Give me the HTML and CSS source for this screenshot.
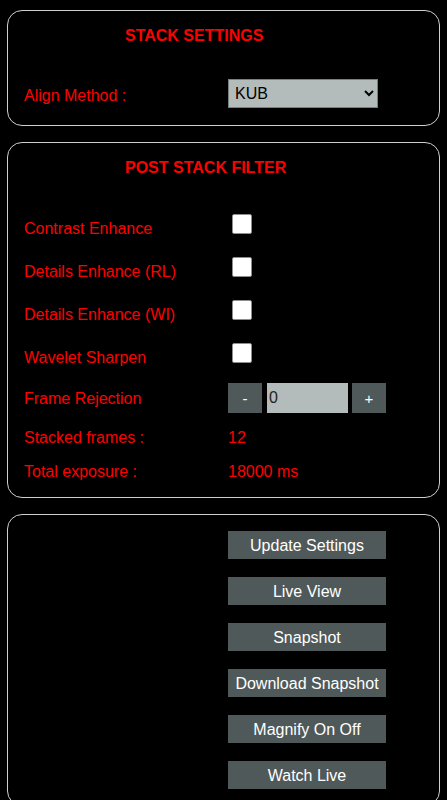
FILE: index.html
```html
<!DOCTYPE html>
<html lang="en">
<head>
  <meta charset="UTF-8" />
  <meta name="viewport" content="width=device-width, initial-scale=1.0" />
  <title>Stack Settings</title>
  <link rel="stylesheet" href="styles.css">
</head>
<body>
  <div class="panel stack">
    <h2 class="title">STACK SETTINGS</h2>
    <div class="row select-row">
      <label for="alignMethod">Align Method :</label>
      <select id="alignMethod">
        <option>KUB</option>
        <option>ECC</option>
        <option>None</option>
      </select>
    </div>
  </div>

  <div class="panel filter">
    <h2 class="title">POST STACK FILTER</h2>
    <div class="row check-row first">
      <label for="contrast">Contrast Enhance</label>
      <input type="checkbox" id="contrast" />
    </div>
    <div class="row check-row">
      <label for="detailsRL">Details Enhance (RL)</label>
      <input type="checkbox" id="detailsRL" />
    </div>
    <div class="row check-row">
      <label for="detailsWI">Details Enhance (WI)</label>
      <input type="checkbox" id="detailsWI" />
    </div>
    <div class="row check-row">
      <label for="wavelet">Wavelet Sharpen</label>
      <input type="checkbox" id="wavelet" />
    </div>
    <div class="row frame-row">
      <label for="frameReject">Frame Rejection</label>
      <button class="step">-</button>
      <input type="text" id="frameReject" value="0" />
      <button class="step plus">+</button>
    </div>
    <div class="row info-row">
      <label>Stacked frames :</label>
      <span id="stackedFrames">12</span>
    </div>
    <div class="row info-row last">
      <label>Total exposure :</label>
      <span id="totalExposure">18000 ms</span>
    </div>
  </div>

  <div class="panel actions">
    <button>Update Settings</button>
    <button>Live View</button>
    <button>Snapshot</button>
    <button>Download Snapshot</button>
    <button>Magnify On Off</button>
    <button>Watch Live</button>
  </div>
</body>
</html>
```

FILE: styles.css
```css
body {
  margin: 0;
  padding: 10px 7px 0 7px;
  background: #000;
  color: #ff0000;
  font-family: "Liberation Sans", Arial, sans-serif;
  font-size: 16px;
}

.panel {
  border: 1px solid #cfcfcf;
  border-radius: 15px;
  padding: 14px 16px 17px 16px;
  margin-bottom: 16px;
}

.title {
  margin: 0;
  padding: 1px 0 0 101px;
  height: 19px;
  line-height: 20px;
  font-size: 16px;
  font-weight: bold;
  color: #ff0000;
}

.row {
  display: flex;
  align-items: center;
  height: 30px;
}

.row label {
  width: 204px;
  flex-shrink: 0;
  padding-top: 2px;
}

.row span {
  padding-top: 2px;
}

.select-row {
  margin-top: 34px;
  height: 29px;
}

.select-row label {
  padding-top: 4px;
}

select {
  width: 150px;
  height: 29px;
  background: #b3bbbb;
  border: 1px solid #7a7f7f;
  border-radius: 0;
  color: #000;
  font-family: "Liberation Sans", Arial, sans-serif;
  font-size: 16px;
  padding: 0 2px;
}

.filter {
  padding-bottom: 11px;
}

.check-row {
  margin-top: 13px;
}

.check-row.first {
  margin-top: 32px;
}

.check-row label {
  padding-top: 9px;
}

input[type="checkbox"] {
  appearance: none;
  -webkit-appearance: none;
  width: 20px;
  height: 20px;
  margin: 0 0 0 4px;
  background: #fff;
  border: 1px solid #8d8d8d;
  border-radius: 2px;
}

.frame-row {
  margin-top: 15px;
}

.step {
  width: 34px;
  height: 30px;
  padding: 0;
  background: #4f5959;
  color: #fff;
  border: 1px solid #4f5959;
  font-family: "Liberation Sans", Arial, sans-serif;
  font-size: 15px;
}

.step.plus {
  margin-left: 4px;
}

#frameReject {
  width: 81px;
  height: 30px;
  box-sizing: border-box;
  margin-left: 5px;
  padding: 0 2px;
  background: #b3bbbb;
  border: none;
  color: #222;
  font-family: "Liberation Sans", Arial, sans-serif;
  font-size: 16px;
}

.info-row {
  margin-top: 9px;
}

.info-row.last {
  margin-top: 4px;
}

.actions {
  display: flex;
  flex-direction: column;
  gap: 18px;
  padding: 16px 16px 16px 220px;
}

.actions button {
  width: 158px;
  height: 28px;
  padding: 2px 0 0 0;
  background: #4f5959;
  color: #fff;
  border: 1px solid #4f5959;
  font-family: "Liberation Sans", Arial, sans-serif;
  font-size: 16px;
}
```
